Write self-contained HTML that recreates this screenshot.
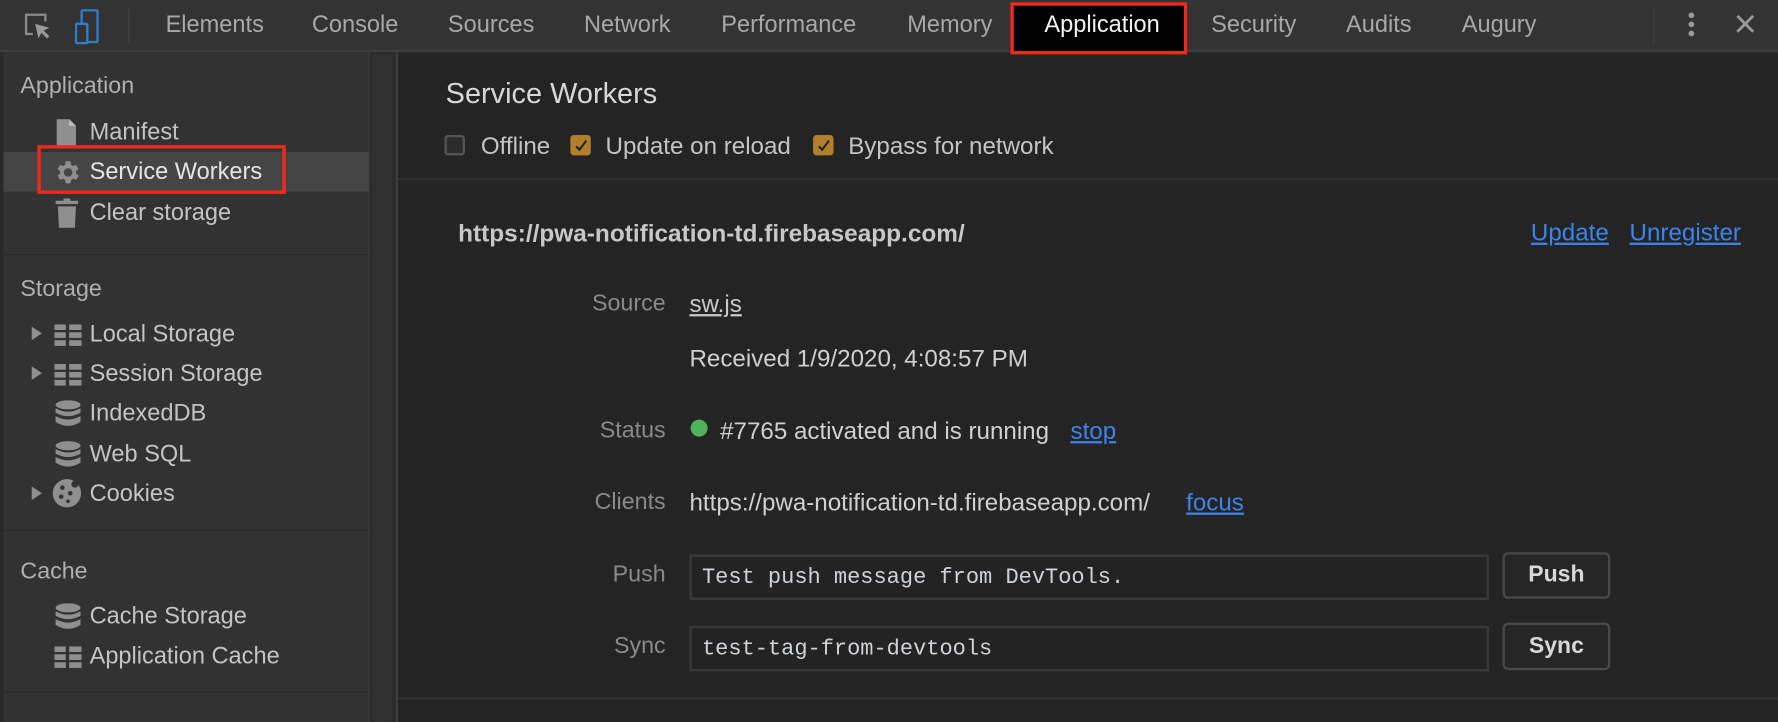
<!DOCTYPE html>
<html><head><meta charset="utf-8"><style>
html,body{margin:0;padding:0;width:1778px;height:722px;overflow:hidden;background:#242424}
#w{position:absolute;left:0;top:0;width:1568px;height:637px;transform:scale(1.134);transform-origin:0 0;font-family:"Liberation Sans",sans-serif;background:#242424}
.a{position:absolute;white-space:nowrap}
.t{font-size:20.8px;color:#a8a8a8;line-height:22px}
.s{font-size:20.8px;color:#c4c4c4;line-height:22px}
.h{font-size:20.5px;color:#b0b0b0;line-height:22px}
.lab{font-size:20.5px;color:#8a8a8a;line-height:22px;text-align:right;width:120px}
.val{font-size:21.3px;color:#d0d0d0;line-height:22px}
.lnk{color:#3d84ea;text-decoration:underline}
.cb{position:absolute;width:18px;height:18px;border-radius:3px}
.inp{position:absolute;border:2px solid #3a3a3a;background:#232323;font-family:"Liberation Mono",monospace;font-size:19.4px;color:#cfd3d8;line-height:36px;padding-left:9px;box-sizing:border-box}
.btn{position:absolute;border:2px solid #4a4a4a;border-radius:5px;background:#262626;color:#d8d8d8;font-weight:bold;font-size:20.3px;text-align:center;box-sizing:border-box}
</style></head><body><div id="w">
<div class="a" style="left:0;top:0;width:1568px;height:44px;background:#333;border-bottom:2px solid #3d3d3d"></div>
<svg class="a" style="left:20px;top:10px" width="26" height="26" viewBox="0 0 26 26"><path d="M9 20H3V3h17v6" fill="none" stroke="#8a8a8a" stroke-width="2"/><path d="M11 11l3 13 2.5-5 5 5 2-2-5-5 5-2.5z" fill="#9a9a9a"/></svg>
<svg class="a" style="left:66px;top:8px" width="28" height="32" viewBox="0 0 28 32"><rect x="6" y="1" width="14" height="28" rx="1" fill="none" stroke="#2f7fd0" stroke-width="2"/><rect x="1" y="13" width="10" height="17" rx="1" fill="#333" stroke="#2f7fd0" stroke-width="2"/></svg>
<div class="a" style="left:113px;top:8px;width:1px;height:30px;background:#444"></div>
<div class="a t" style="left:146px;top:11px">Elements</div>
<div class="a t" style="left:275px;top:11px">Console</div>
<div class="a t" style="left:395px;top:11px">Sources</div>
<div class="a t" style="left:515px;top:11px">Network</div>
<div class="a t" style="left:636px;top:11px">Performance</div>
<div class="a t" style="left:800px;top:11px">Memory</div>
<div class="a" style="left:891px;top:2px;width:150px;height:40px;background:#000;border:3px solid #f0291c"></div>
<div class="a t" style="left:921px;top:11px;color:#f2f2f2">Application</div>
<div class="a t" style="left:1068px;top:11px">Security</div>
<div class="a t" style="left:1187px;top:11px">Audits</div>
<div class="a t" style="left:1289px;top:11px">Augury</div>
<div class="a" style="left:1458px;top:8px;width:1px;height:30px;background:#444"></div>
<div class="a" style="left:1489px;top:11px;width:5px;height:5px;border-radius:3px;background:#999;box-shadow:0 8px 0 #999,0 16px 0 #999"></div>
<svg class="a" style="left:1530px;top:12px" width="18" height="18"><path d="M2 2L16 16M16 2L2 16" stroke="#999" stroke-width="2.5"/></svg>
<div class="a" style="left:0;top:46px;width:325px;height:591px;background:#323232"></div>
<div class="a" style="left:0;top:46px;width:3px;height:591px;background:#2a2a2a"></div>
<div class="a" style="left:325px;top:46px;width:24px;height:591px;background:#2a2a2a;border-left:1px solid #3c3c3c"></div>
<div class="a" style="left:328px;top:48px;width:18px;height:589px;background:#303030;border-radius:3px"></div>
<div class="a" style="left:349px;top:46px;width:2px;height:591px;background:#3e3e3e"></div>
<div class="a h" style="left:18px;top:65px">Application</div>
<svg class="a" style="left:49px;top:105px" width="20" height="24"><path d="M1 0h11l6 6v18H1z" fill="#8f8f8f"/><path d="M12 0v6h6" fill="#bbb"/></svg>
<div class="a s" style="left:79px;top:106px">Manifest</div>
<div class="a" style="left:3px;top:134px;width:322px;height:35px;background:#454545"></div>
<div class="a" style="left:33px;top:128px;width:213px;height:37px;border:3px solid #f0291c"></div>
<svg class="a" style="left:46px;top:139px" width="26" height="26" viewBox="0 0 24 24"><path fill="#8f8f8f" d="M19.4 13a7.5 7.5 0 000-2l2.1-1.6-2-3.5-2.5 1a7 7 0 00-1.7-1L15 3h-4l-.4 2.9a7 7 0 00-1.7 1l-2.5-1-2 3.5L6.5 11a7.5 7.5 0 000 2l-2.1 1.6 2 3.5 2.5-1a7 7 0 001.7 1L11 21h4l.4-2.9a7 7 0 001.7-1l2.5 1 2-3.5zM13 15.5a3.5 3.5 0 110-7 3.5 3.5 0 010 7z"/></svg>
<div class="a s" style="left:79px;top:141px;color:#e4e4e4">Service Workers</div>
<svg class="a" style="left:49px;top:175px" width="20" height="26"><rect x="0" y="2" width="20" height="3" fill="#8f8f8f"/><rect x="7" y="0" width="6" height="3" fill="#8f8f8f"/><path d="M2 7h16l-1 19H3z" fill="#8f8f8f"/></svg>
<div class="a s" style="left:79px;top:177px">Clear storage</div>
<div class="a" style="left:3px;top:224px;width:322px;height:1px;background:#2a2a2a"></div>
<div class="a h" style="left:18px;top:244px">Storage</div>
<div class="a" style="left:3px;top:467px;width:322px;height:1px;background:#2a2a2a"></div>
<div class="a h" style="left:18px;top:493px">Cache</div>
<div class="a" style="left:3px;top:610px;width:322px;height:1px;background:#2a2a2a"></div>
<div class="a" style="left:28px;top:288px;border-left:9px solid #8f8f8f;border-top:6px solid transparent;border-bottom:6px solid transparent"></div>
<div class="a" style="left:28px;top:323px;border-left:9px solid #8f8f8f;border-top:6px solid transparent;border-bottom:6px solid transparent"></div>
<div class="a" style="left:28px;top:429px;border-left:9px solid #8f8f8f;border-top:6px solid transparent;border-bottom:6px solid transparent"></div>
<svg class="a" style="left:48px;top:286px" width="24" height="20"><g fill="#8f8f8f"><rect x="0" y="0" width="10" height="5"/><rect x="13" y="0" width="11" height="5"/><rect x="0" y="7" width="10" height="5"/><rect x="13" y="7" width="11" height="5"/><rect x="0" y="14" width="10" height="5"/><rect x="13" y="14" width="11" height="5"/></g></svg>
<div class="a s" style="left:79px;top:284px">Local Storage</div>
<svg class="a" style="left:48px;top:321px" width="24" height="20"><g fill="#8f8f8f"><rect x="0" y="0" width="10" height="5"/><rect x="13" y="0" width="11" height="5"/><rect x="0" y="7" width="10" height="5"/><rect x="13" y="7" width="11" height="5"/><rect x="0" y="14" width="10" height="5"/><rect x="13" y="14" width="11" height="5"/></g></svg>
<div class="a s" style="left:79px;top:319px">Session Storage</div>
<svg class="a" style="left:48px;top:353px" width="24" height="24"><g fill="#8f8f8f"><ellipse cx="12" cy="4" rx="11" ry="4"/><path d="M1 7q11 6 22 0v4q-11 6-22 0z"/><path d="M1 14q11 6 22 0v5q-11 7-22 0z"/></g></svg>
<div class="a s" style="left:79px;top:354px">IndexedDB</div>
<svg class="a" style="left:48px;top:389px" width="24" height="24"><g fill="#8f8f8f"><ellipse cx="12" cy="4" rx="11" ry="4"/><path d="M1 7q11 6 22 0v4q-11 6-22 0z"/><path d="M1 14q11 6 22 0v5q-11 7-22 0z"/></g></svg>
<div class="a s" style="left:79px;top:390px">Web SQL</div>
<svg class="a" style="left:46px;top:422px" width="26" height="26"><circle cx="13" cy="13" r="12.5" fill="#8f8f8f"/><g fill="#323232"><circle cx="9" cy="8" r="2"/><circle cx="16" cy="13" r="2"/><circle cx="8" cy="16" r="2"/><circle cx="14" cy="20" r="1.6"/><circle cx="20" cy="5" r="3"/></g></svg>
<div class="a s" style="left:79px;top:425px">Cookies</div>
<svg class="a" style="left:48px;top:532px" width="24" height="24"><g fill="#8f8f8f"><ellipse cx="12" cy="4" rx="11" ry="4"/><path d="M1 7q11 6 22 0v4q-11 6-22 0z"/><path d="M1 14q11 6 22 0v5q-11 7-22 0z"/></g></svg>
<div class="a s" style="left:79px;top:533px">Cache Storage</div>
<svg class="a" style="left:48px;top:570px" width="24" height="20"><g fill="#8f8f8f"><rect x="0" y="0" width="10" height="5"/><rect x="13" y="0" width="11" height="5"/><rect x="0" y="7" width="10" height="5"/><rect x="13" y="7" width="11" height="5"/><rect x="0" y="14" width="10" height="5"/><rect x="13" y="14" width="11" height="5"/></g></svg>
<div class="a s" style="left:79px;top:568px">Application Cache</div>
<div class="a" style="left:393px;top:70px;font-size:25.5px;color:#d8d8d8;line-height:26px">Service Workers</div>
<div class="cb" style="left:392px;top:119px;border:2px solid #555;background:#2c2c2c;box-sizing:border-box"></div>
<div class="a s" style="left:424px;top:118px;font-size:21.3px">Offline</div>
<div class="cb" style="left:503px;top:119px;background:#b07f2c"></div>
<svg class="a" style="left:506px;top:122px" width="13" height="13"><path d="M2 7l3 3 6-8" fill="none" stroke="#222" stroke-width="1.8"/></svg>
<div class="a s" style="left:534px;top:118px;font-size:21.3px">Update on reload</div>
<div class="cb" style="left:717px;top:119px;background:#b07f2c"></div>
<svg class="a" style="left:720px;top:122px" width="13" height="13"><path d="M2 7l3 3 6-8" fill="none" stroke="#222" stroke-width="1.8"/></svg>
<div class="a s" style="left:748px;top:118px;font-size:21.3px">Bypass for network</div>
<div class="a" style="left:351px;top:157px;width:1217px;height:2px;background:#303030"></div>
<div class="a" style="left:404px;top:195px;font-size:21.5px;font-weight:bold;color:#c8c8c8;line-height:22px">https://pwa-notification-td.firebaseapp.com/</div>
<div class="a val lnk" style="left:1350px;top:194px">Update</div>
<div class="a val lnk" style="left:1437px;top:194px">Unregister</div>
<div class="a lab" style="left:467px;top:257px">Source</div>
<div class="a val" style="left:608px;top:257px;text-decoration:underline;color:#c8c8c8">sw.js</div>
<div class="a val" style="left:608px;top:305px">Received 1/9/2020, 4:08:57 PM</div>
<div class="a lab" style="left:467px;top:369px">Status</div>
<div class="a" style="left:609px;top:370px;width:15px;height:15px;border-radius:50%;background:#4fb35a"></div>
<div class="a val" style="left:635px;top:369px">#7765 activated and is running</div>
<div class="a val lnk" style="left:944px;top:369px">stop</div>
<div class="a lab" style="left:467px;top:432px">Clients</div>
<div class="a val" style="left:608px;top:432px">https://pwa-notification-td.firebaseapp.com/</div>
<div class="a val lnk" style="left:1046px;top:432px">focus</div>
<div class="a lab" style="left:467px;top:496px">Push</div>
<div class="inp" style="left:608px;top:489px;width:705px;height:40px">Test push message from DevTools.</div>
<div class="btn" style="left:1325px;top:487px;width:95px;height:41px;line-height:37px">Push</div>
<div class="a lab" style="left:467px;top:559px">Sync</div>
<div class="inp" style="left:608px;top:552px;width:705px;height:40px">test-tag-from-devtools</div>
<div class="btn" style="left:1325px;top:549px;width:95px;height:42px;line-height:38px">Sync</div>
<div class="a" style="left:351px;top:615px;width:1217px;height:2px;background:#303030"></div>
</div></body></html>
